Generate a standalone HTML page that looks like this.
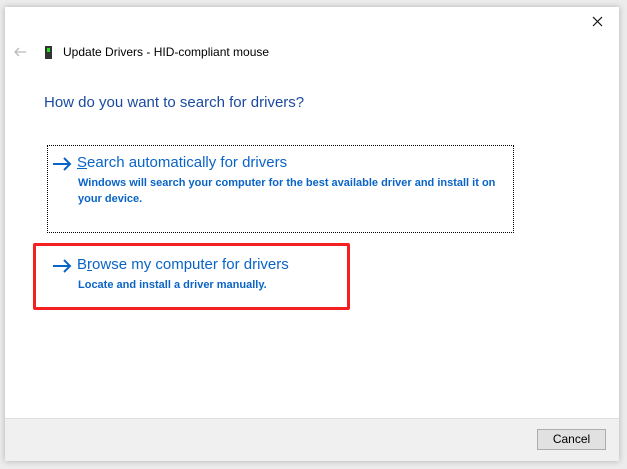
<!DOCTYPE html>
<html><head><style>
body{margin:0;width:627px;height:469px;background:#ececec;position:relative;overflow:hidden;font-family:"Liberation Sans",sans-serif}
.win{position:absolute;left:5px;top:7px;width:614px;height:454px;background:#fff;box-shadow:0 0 6px rgba(0,0,0,.25)}
.foot{position:absolute;left:0;right:0;bottom:0;height:42px;background:#f0f0f0;border-top:1px solid #dfdfdf}
.btn{position:absolute;left:532px;top:10px;width:67px;height:19px;border:1px solid #adadad;background:#e1e1e1;font-size:12px;text-align:center;line-height:19px;color:#000}
.t{position:absolute;white-space:nowrap}
.lk{font-size:15px;color:#0a64c8}
.ds{font-size:11px;color:#0a64c8;font-weight:bold;line-height:16px}
</style></head><body>
<div class="win">
<svg class="t" style="left:587px;top:9px" width="11" height="11"><path d="M1 1L10 10M10 1L1 10" stroke="#111" stroke-width="1.2"/></svg>
<svg class="t" style="left:8px;top:39px" width="14" height="12"><path d="M13 6H2M6 2L2 6l4 4" stroke="#bbb" stroke-width="1.3" fill="none"/></svg>
<div class="t" style="left:40px;top:39px;width:7px;height:13px;background:#333"><div style="position:absolute;left:2px;top:2px;width:3px;height:4px;background:#2d2"></div></div>
<div class="t" style="left:58px;top:38px;font-size:12px;color:#000">Update Drivers - HID-compliant mouse</div>
<div class="t" style="left:39px;top:87px;font-size:15px;color:#1a4a9f">How do you want to search for drivers?</div>
<div class="t" style="left:42px;top:138px;width:465px;height:86px;border:1px dotted #000"></div>
<svg class="t" style="left:47px;top:150px" width="20" height="14"><path d="M1 7H18M12 1l6 6-6 6" stroke="#0a64c8" stroke-width="2" fill="none"/></svg>
<div class="t lk" style="left:72px;top:147px"><span style="text-decoration:underline;text-underline-offset:1px">S</span>earch automatically for drivers</div>
<div class="t ds" style="left:73px;top:168px">Windows will search your computer for the best available driver and install it on<br>your device.</div>
<div class="t" style="left:28px;top:236px;width:311px;height:61px;border:3px solid #f42020;border-radius:2px"></div>
<svg class="t" style="left:47px;top:252px" width="20" height="14"><path d="M1 7H18M12 1l6 6-6 6" stroke="#0a64c8" stroke-width="2" fill="none"/></svg>
<div class="t lk" style="left:72px;top:249px">B<span style="text-decoration:underline;text-underline-offset:1px">r</span>owse my computer for drivers</div>
<div class="t ds" style="left:73px;top:270px">Locate and install a driver manually.</div>
<div class="foot"><div class="btn">Cancel</div></div>
</div>
</body></html>
